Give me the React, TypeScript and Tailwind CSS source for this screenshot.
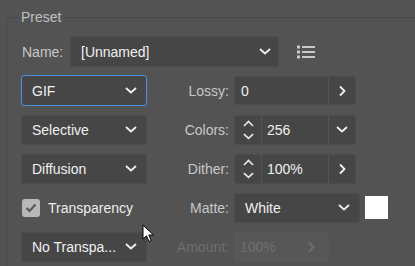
import React from "react";

const Chevron = ({ dir = "down", className = "" }: { dir?: "down" | "right" | "up"; className?: string }) => {
  if (dir === "right")
    return (
      <svg width="8" height="12" viewBox="0 0 8 12" className={className}>
        <path d="M2 1.5 L6.5 6 L2 10.5" fill="none" stroke="currentColor" strokeWidth="1.8" />
      </svg>
    );
  if (dir === "up")
    return (
      <svg width="11" height="7" viewBox="0 0 11 7" className={className}>
        <path d="M1 6 L5.5 1.5 L10 6" fill="none" stroke="currentColor" strokeWidth="1.6" />
      </svg>
    );
  return (
    <svg width="12" height="7" viewBox="0 0 12 7" className={className}>
      <path d="M1 1 L6 5.5 L11 1" fill="none" stroke="currentColor" strokeWidth="1.8" />
    </svg>
  );
};

const Select = ({ label, focused = false, w = "w-[126px]", h = "h-[30px]" }: { label: string; focused?: boolean; w?: string; h?: string }) => (
  <div
    className={`${w} ${h} flex items-center justify-between rounded-[3px] border bg-[#464646] pl-[10px] pr-[9px] ${
      focused ? "border-[#4a90e2]" : "border-[#4c4c4c]"
    }`}
  >
    <span className="text-[#f0f0f0] whitespace-nowrap">{label}</span>
    <Chevron className="text-[#f0f0f0]" />
  </div>
);

const Spinner = () => (
  <div className="w-[27px] h-full flex flex-col items-center justify-center gap-[6px] border-r border-[#555555] text-[#e8e8e8]">
    <Chevron dir="up" />
    <Chevron dir="down" className="w-[11px]" />
  </div>
);

const Label = ({ children, dim = false }: { children: React.ReactNode; dim?: boolean }) => (
  <div className={`text-right pr-[5px] ${dim ? "text-[#6f6f6f]" : "text-[#c8c8c8]"}`}>{children}</div>
);

export default function App() {
  return (
    <div
      className="w-[415px] h-[266px] overflow-hidden bg-[#535353] text-[14px] leading-[20px]"
      style={{ fontFamily: '"Liberation Sans", Arial, sans-serif' }}
    >
      <div className="relative">
        <fieldset className="ml-[6px] mt-[7px] w-[430px] h-[300px] border border-[#4a4a4a] rounded-[4px] pl-[14px] pt-[9px]">
          <legend className="ml-[-3px] px-[3px] text-[#c0c0c0] leading-[20px]">Preset</legend>

          <div className="flex items-center h-[31px]">
            <span className="text-[#c8c8c8] w-[49px] pl-[1px]">Name:</span>
            <div className="w-[209px] h-[31px] flex items-center justify-between rounded-[3px] border border-[#4c4c4c] bg-[#464646] pl-[10px] pr-[7px]">
              <span className="text-[#f0f0f0]">[Unnamed]</span>
              <Chevron className="text-[#f0f0f0]" />
            </div>
            <svg width="18" height="14" viewBox="0 0 18 14" className="ml-[18px] text-[#c8c8c8]">
              <rect x="0" y="0.5" width="3" height="3" fill="currentColor" />
              <rect x="0" y="5.5" width="3" height="3" fill="currentColor" />
              <rect x="0" y="10.5" width="3" height="3" fill="currentColor" />
              <rect x="5" y="1" width="13" height="2" fill="currentColor" />
              <rect x="5" y="6" width="13" height="2" fill="currentColor" />
              <rect x="5" y="11" width="13" height="2" fill="currentColor" />
            </svg>
          </div>

          <div className="grid grid-cols-[126px_87px_auto] auto-rows-[31px] gap-y-[8px] mt-[8px] items-center">
            <Select label="GIF" focused h="h-[31px]" />
            <Label>Lossy:</Label>
            <div className="w-[122px] h-[29px] flex rounded-[3px] border border-[#4c4c4c] bg-[#464646]">
              <div className="flex-1 flex items-center pl-[6px] text-[#f0f0f0] border-r border-[#555555]">0</div>
              <div className="w-[26px] flex items-center justify-center text-[#f0f0f0]">
                <Chevron dir="right" />
              </div>
            </div>

            <Select label="Selective" />
            <Label>Colors:</Label>
            <div className="w-[122px] h-[30px] flex rounded-[3px] border border-[#4c4c4c] bg-[#464646]">
              <Spinner />
              <div className="w-[67px] flex items-center pl-[5px] text-[#f0f0f0] border-r border-[#555555]">256</div>
              <div className="flex-1 flex items-center justify-center text-[#f0f0f0]">
                <Chevron />
              </div>
            </div>

            <Select label="Diffusion" />
            <Label>Dither:</Label>
            <div className="w-[122px] h-[30px] flex rounded-[3px] border border-[#4c4c4c] bg-[#464646]">
              <Spinner />
              <div className="w-[67px] flex items-center pl-[5px] text-[#f0f0f0] border-r border-[#555555]">100%</div>
              <div className="flex-1 flex items-center justify-center text-[#f0f0f0]">
                <Chevron dir="right" />
              </div>
            </div>

            <div className="flex items-center gap-[8px] pl-[1px]">
              <div className="w-[18px] h-[18px] rounded-[3px] bg-[#b8b8b8] flex items-center justify-center">
                <svg width="12" height="10" viewBox="0 0 12 10">
                  <path d="M1.5 5 L4.5 8 L10.5 1.5" fill="none" stroke="#585858" strokeWidth="2.2" />
                </svg>
              </div>
              <span className="text-[#ececec]">Transparency</span>
            </div>
            <Label>Matte:</Label>
            <div className="flex items-center gap-[5px]">
              <Select label="White" />
              <div className="w-[23px] h-[23px] bg-white" />
            </div>

            <Select label="No Transpa..." />
            <Label dim>Amount:</Label>
            <div className="w-[95px] h-[30px] flex items-center justify-between rounded-[3px] bg-[#575757] pl-[6px] pr-[14px] text-[#6f6f6f]">
              <span>100%</span>
              <Chevron dir="right" />
            </div>
          </div>
        </fieldset>

        <svg width="13" height="19" viewBox="0 0 13 19" className="absolute left-[142px] top-[217px]">
          <path d="M1 1 L1 15 L4.5 11.8 L7 17.5 L9.2 16.5 L6.8 11 L11.5 11 Z" fill="#ffffff" stroke="#000000" strokeWidth="1" strokeLinejoin="round" />
        </svg>
      </div>
    </div>
  );
}
